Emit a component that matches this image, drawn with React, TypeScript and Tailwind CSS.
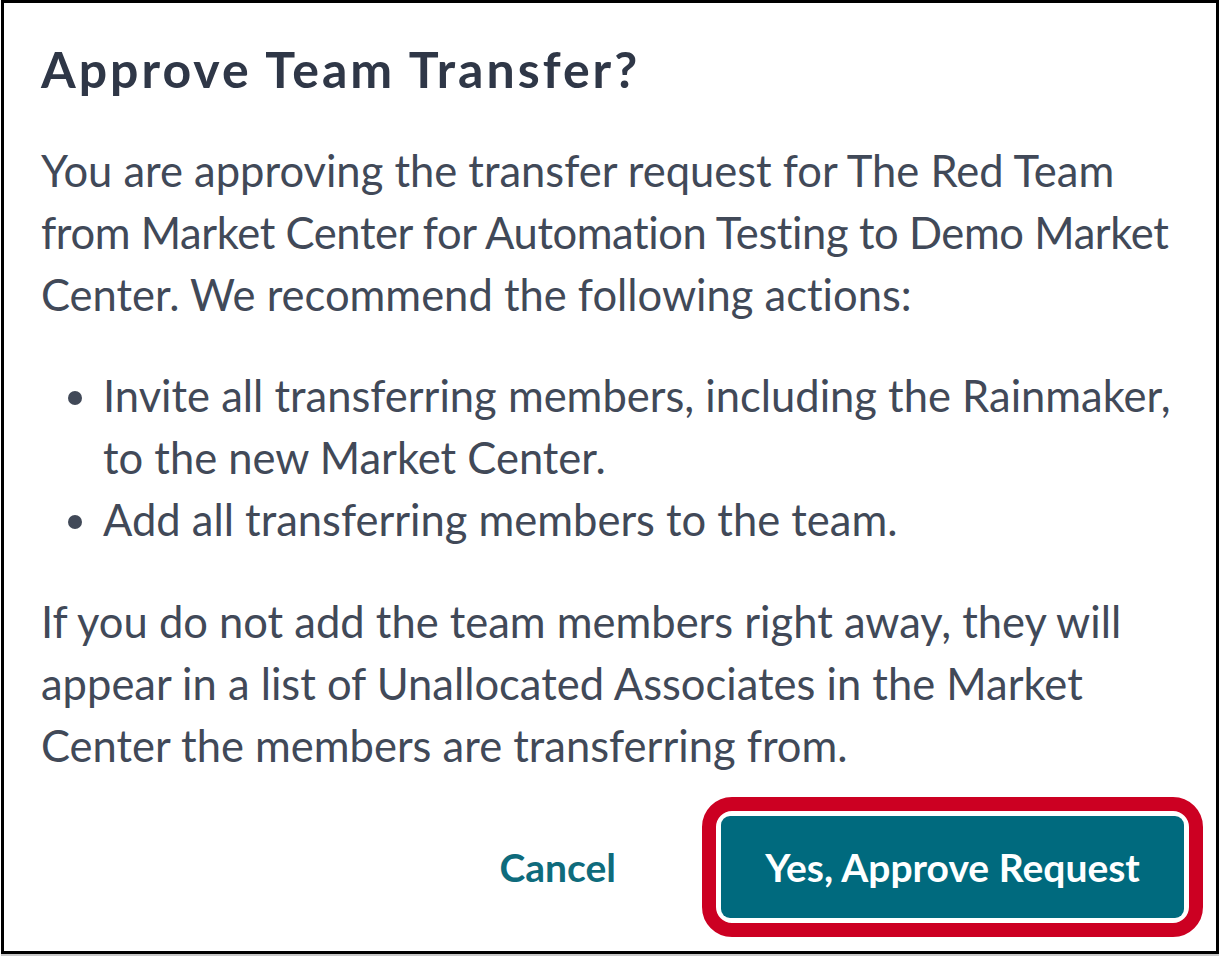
import React from "react";

const ApproveTransferDialog = () => {
  return (
    <div className="w-[1220px] h-[956px] bg-white font-['Lato',sans-serif] [font-variant-ligatures:none]">
      <div className="ml-px w-[1218px] h-[954px] border-[3px] border-black shadow-[0_2px_0_#c8c8c8] flex flex-col pl-[37px] pr-[13px] pt-[32px]">
        {/* Title */}
        <h1 className="text-[50px] leading-[68px] font-bold tracking-[3px] text-[#2f3747]">
          Approve Team Transfer?
        </h1>

        {/* Body */}
        <p className="mt-[36px] text-[43.5px] leading-[62px] text-[#414958]">
          You are approving the transfer request for The Red Team
          <br />
          <span className="tracking-[-0.4px]">
            from Market Center for Automation Testing to Demo Market
          </span>
          <br />
          Center. We recommend the following actions:
        </p>

        <ul className="mt-[39px] list-disc pl-[62px] text-[43.5px] leading-[62px] text-[#414958]">
          <li>
            Invite all transferring members, including the Rainmaker,
            <br />
            to the new Market Center.
          </li>
          <li>Add all transferring members to the team.</li>
        </ul>

        <p className="mt-[40px] text-[43.5px] leading-[62px] text-[#414958]">
          If you do not add the team members right away, they will
          <br />
          appear in a list of Unallocated Associates in the Market
          <br />
          Center the members are transferring from.
        </p>

        {/* Actions */}
        <div className="mt-[21px] flex items-center justify-end">
          <button className="text-[39px] font-bold text-[#0e6b7c] mr-[86px]">
            Cancel
          </button>
          <div className="rounded-[30px] border-[14px] border-[#cc0022] p-[5px]">
            <button className="w-[463px] h-[102px] rounded-[9px] bg-[#006a7e] text-[39px] font-bold text-white">
              Yes, Approve Request
            </button>
          </div>
        </div>
      </div>
    </div>
  );
};

export default function App() {
  return <ApproveTransferDialog />;
}
